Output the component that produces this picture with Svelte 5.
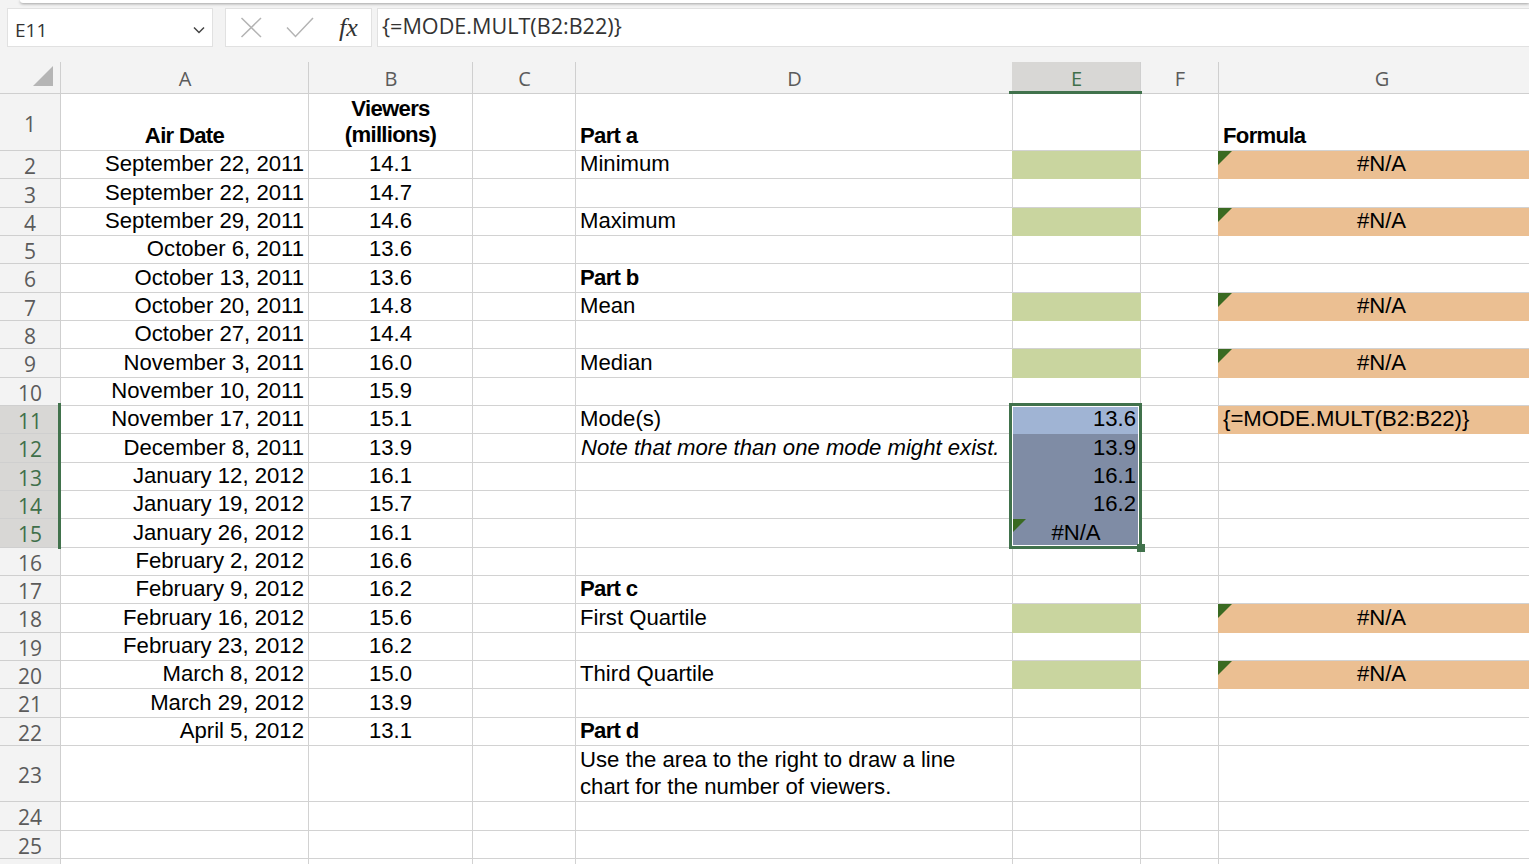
<script>
	const columns = ['A', 'B', 'C', 'D', 'E', 'F', 'G'];

	const dates = [
		['September 22, 2011', '14.1'], ['September 22, 2011', '14.7'], ['September 29, 2011', '14.6'],
		['October 6, 2011', '13.6'], ['October 13, 2011', '13.6'], ['October 20, 2011', '14.8'],
		['October 27, 2011', '14.4'], ['November 3, 2011', '16.0'], ['November 10, 2011', '15.9'],
		['November 17, 2011', '15.1'], ['December 8, 2011', '13.9'], ['January 12, 2012', '16.1'],
		['January 19, 2012', '15.7'], ['January 26, 2012', '16.1'], ['February 2, 2012', '16.6'],
		['February 9, 2012', '16.2'], ['February 16, 2012', '15.6'], ['February 23, 2012', '16.2'],
		['March 8, 2012', '15.0'], ['March 29, 2012', '13.9'], ['April 5, 2012', '13.1']
	];

	// column D label, by row number
	const labels = {
		1: { text: 'Part a', kind: 'bold' }, 2: { text: 'Minimum' }, 4: { text: 'Maximum' },
		6: { text: 'Part b', kind: 'bold' }, 7: { text: 'Mean' }, 9: { text: 'Median' },
		11: { text: 'Mode(s)' },
		12: { text: 'Note that more than one mode might exist.', kind: 'note' },
		17: { text: 'Part c', kind: 'bold' }, 18: { text: 'First Quartile' }, 20: { text: 'Third Quartile' },
		22: { text: 'Part d', kind: 'bold' },
		23: { text: 'Use the area to the right to draw a line chart for the number of viewers.', kind: 'wrap' }
	};

	const answerRows = [2, 4, 7, 9, 18, 20];
	const modes = { 11: '13.6', 12: '13.9', 13: '16.1', 14: '16.2' };
	// row 26 only peeks in at the bottom of the window, so it has no visible number
	const rowNumbers = Array.from({ length: 26 }, (_, i) => i + 1);
	const isSelected = (n) => n >= 11 && n <= 15;
</script>

<div class="app">
	<div class="ribbon-edge"></div>

	<div class="formula-bar">
		<div class="name-box">
			<span>E11</span>
			<svg width="12" height="8" viewBox="0 0 12 8"><path d="M1 1.5 6 6.5l5-5" fill="none" stroke="#444" stroke-width="1.5"/></svg>
		</div>
		<div class="fx-box">
			<svg width="22" height="21" viewBox="0 0 22 21"><path d="M1.5 1l19.5 19M21 1 1.5 20" fill="none" stroke="#b4b4b4" stroke-width="1.5"/></svg>
			<svg width="28" height="21" viewBox="0 0 28 21"><path d="M1 10.5l8.500 9L27 1" fill="none" stroke="#b4b4b4" stroke-width="1.5"/></svg>
			<span class="fx">fx</span>
		</div>
		<div class="formula-input">{'{=MODE.MULT(B2:B22)}'}</div>
	</div>

	<div class="sheet">
		<div class="corner"><i></i></div>
		{#each columns as col}
			<div class="col-head" class:sel={col === 'E'}>
				{col}
				{#if col === 'E'}<span class="rail-col"></span>{/if}
			</div>
		{/each}

		{#each rowNumbers as n}
			<div class="row-head" class:sel={isSelected(n)}>
				{n < 26 ? n : ''}
				{#if n === 11}<span class="rail-row"></span>{/if}
			</div>

			<!-- A -->
			{#if n === 1}
				<div class="cell center bold">Air Date</div>
			{:else if n <= 22}
				<div class="cell right">{dates[n - 2][0]}</div>
			{:else}
				<div class="cell"></div>
			{/if}

			<!-- B -->
			{#if n === 1}
				<div class="cell center bold wrap viewers">Viewers<br />(millions)</div>
			{:else if n <= 22}
				<div class="cell center">{dates[n - 2][1]}</div>
			{:else}
				<div class="cell"></div>
			{/if}

			<div class="cell"></div>

			<!-- D -->
			<div class="cell {labels[n]?.kind ?? ''}">{labels[n]?.text ?? ''}</div>

			<!-- E -->
			{#if answerRows.includes(n)}
				<div class="cell fill-green"></div>
			{:else if n === 11}
				<div class="cell right active">
					{modes[n]}
					<div class="selection"><span class="handle"></span></div>
				</div>
			{:else if modes[n]}
				<div class="cell right range">{modes[n]}</div>
			{:else if n === 15}
				<div class="cell center range flagged">#N/A</div>
			{:else}
				<div class="cell"></div>
			{/if}

			<div class="cell"></div>

			<!-- G -->
			{#if n === 1}
				<div class="cell last bold">Formula</div>
			{:else if answerRows.includes(n)}
				<div class="cell last center fill-orange flagged">#N/A</div>
			{:else if n === 11}
				<div class="cell last fill-orange formula">{'{=MODE.MULT(B2:B22)}'}</div>
			{:else}
				<div class="cell last"></div>
			{/if}
		{/each}
	</div>
</div>

<style>
	:global(body) {
		margin: 0;
		background: #f3f3f3;
		overflow: hidden;
	}

	.app {
		height: 864px;
		overflow: hidden;
		background: #f3f3f3;
		font-family: 'Liberation Sans', Arial, sans-serif;
		color: #000;
	}

	.ribbon-edge {
		height: 3px;
		margin-left: 20px;
		background: #fff;
		border-radius: 0 0 0 6px;
		box-shadow: 0 1px 3px rgba(0, 0, 0, 0.35);
	}

	.formula-bar {
		display: flex;
		height: 39px;
		margin-top: 5px;
		padding-left: 7px;
		font-family: 'Open Sans', 'Noto Sans', sans-serif;
	}

	.name-box,
	.fx-box,
	.formula-input {
		box-sizing: border-box;
		background: #fff;
		border: 1px solid #e1e1e1;
	}

	.name-box {
		display: flex;
		align-items: center;
		justify-content: space-between;
		width: 206px;
		padding: 4px 7px 0 7px;
		font-size: 19px;
		color: #333;
	}

	.fx-box {
		display: flex;
		align-items: center;
		width: 147px;
		margin-left: 12px;
		padding-left: 14px;
		gap: 24px;
	}

	.fx {
		margin-left: 1px;
		font-family: 'Liberation Serif', serif;
		font-style: italic;
		font-size: 26px;
		color: #333;
	}

	.formula-input {
		flex: 1;
		margin-left: 5px;
		padding: 0 4px;
		border-right: 0;
		font-size: 21.6px;
		line-height: 34px;
		color: #333;
	}

	.sheet {
		display: grid;
		grid-template-columns: 61px 248px 164px 103px 437px 128px 78px 326px;
		grid-template-rows: 32px 57px repeat(21, 28.333px) 56px 29px 28px 28px;
		margin-top: 15px;
		background: #fff;
	}

	.corner,
	.col-head,
	.row-head {
		box-sizing: border-box;
		background: #f3f3f3;
		border-right: 1px solid #cfcfcf;
		border-bottom: 1px solid #cfcfcf;
		font-family: 'Open Sans', 'Noto Sans', sans-serif;
		color: #5b5b5b;
	}

	.corner {
		position: relative;
	}

	.corner i {
		position: absolute;
		right: 7px;
		bottom: 7px;
		width: 0;
		height: 0;
		border-style: solid;
		border-width: 0 0 20px 20px;
		border-color: transparent transparent #b5b5b5 transparent;
	}

	.col-head {
		position: relative;
		display: flex;
		align-items: center;
		justify-content: center;
		padding: 2px 0 0 1px;
		font-size: 20px;
	}

	.col-head.sel {
		background: #d8d7d5;
		color: #3f6f4a;
		margin-left: -1px;
	}

	.row-head {
		position: relative;
		display: flex;
		align-items: center;
		justify-content: center;
		padding: 3px 0 0 0;
		font-size: 21px;
	}

	.row-head.sel {
		background: #d8d7d5;
		color: #3f6f4a;
	}

	.rail-col,
	.rail-row {
		position: absolute;
		z-index: 2;
		background: #41724c;
	}

	.rail-col {
		left: -3px;
		right: -2px;
		bottom: -1px;
		height: 3px;
	}

	.rail-row {
		right: -1px;
		top: -3px;
		width: 3px;
		height: 146px;
	}

	.cell {
		position: relative;
		box-sizing: border-box;
		display: flex;
		align-items: flex-end;
		min-width: 0;
		padding: 0 4px 1px;
		border-right: 1px solid #d2d2d2;
		border-bottom: 1px solid #d2d2d2;
		font-size: 22.15px;
		line-height: 27px;
		white-space: nowrap;
	}

	.right {
		justify-content: flex-end;
	}

	.center {
		justify-content: center;
		text-align: center;
	}

	.bold {
		font-weight: bold;
		letter-spacing: -0.7px;
	}

	.wrap {
		white-space: normal;
		padding-right: 30px;
	}

	.viewers {
		padding: 0 0 2px;
		line-height: 26px;
	}

	.note {
		font-style: italic;
		padding-left: 5px;
	}

	.last {
		border-right: 0;
	}

	.fill-green,
	.fill-orange {
		margin-left: -1px;
		border-color: transparent;
	}

	.fill-green {
		background: #c9d59f;
	}

	.fill-orange {
		background: #ebbf92;
	}

	.formula {
		padding-left: 5px;
	}

	.active,
	.range {
		border-color: transparent;
		margin-left: -1px;
	}

	.active {
		background: #a0b4d4;
	}

	.range {
		background: #7f8ca5;
	}

	.flagged::before {
		content: '';
		position: absolute;
		left: 0;
		top: 0;
		border-style: solid;
		border-width: 14px 14px 0 0;
		border-color: #3a6a22 transparent transparent transparent;
	}

	.selection {
		position: absolute;
		z-index: 2;
		box-sizing: border-box;
		left: -3px;
		right: -2px;
		top: -3px;
		height: 146px;
		border: 3px solid #41724c;
		box-shadow: inset 0 0 0 1px #fff;
		pointer-events: none;
	}

	.handle {
		position: absolute;
		right: -6px;
		bottom: -6px;
		width: 8px;
		height: 8px;
		background: #41724c;
	}
</style>
